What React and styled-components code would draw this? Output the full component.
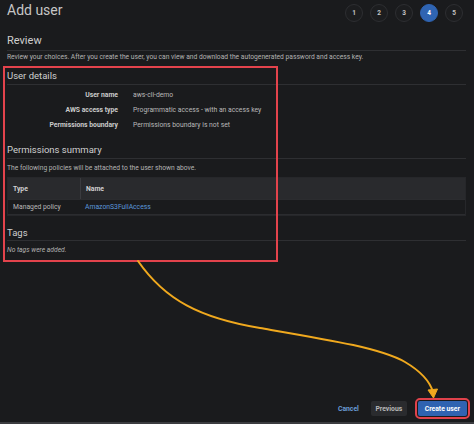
import React from "react";
import styled, { createGlobalStyle } from "styled-components";

const Global = createGlobalStyle`
  html, body { margin: 0; padding: 0; background: #1a1b1d; }
  body { font-family: Roboto, "Liberation Sans", Arial, sans-serif; }
  * { box-sizing: border-box; }
`;

const Page = styled.div`
  position: relative;
  width: 474px;
  height: 424px;
  overflow: hidden;
  background: #1a1b1d;
  display: flex;
  flex-direction: column;
  color: #c9c9c9;
`;

const Content = styled.div`
  padding: 0 8px 0 7px;
  display: flex;
  flex-direction: column;
`;

const Header = styled.div`
  height: 28px;
  display: flex;
  justify-content: space-between;
  align-items: flex-start;
`;

const Title = styled.h1`
  margin: 0;
  font-size: 14px;
  line-height: 20px;
  font-weight: 400;
  color: #c6c6c6;
`;

const Steps = styled.div`
  display: flex;
  gap: 7px;
  margin-top: 4px;
  margin-right: 3px;
`;

const Step = styled.div`
  width: 18px;
  height: 18px;
  border-radius: 50%;
  display: flex;
  align-items: center;
  justify-content: center;
  font-size: 6.5px;
  font-weight: 700;
  color: ${(p) => (p.$active ? "#ffffff" : "#c4c4c4")};
  background: ${(p) => (p.$active ? "#2f64b2" : "#1c1d1f")};
  border: 1px solid ${(p) => (p.$active ? "#2f64b2" : "#2d2e31")};
`;

const SectionTitle = styled.div`
  font-size: ${(p) => p.$size || 9.5}px;
  line-height: ${(p) => p.$lh || 12}px;
  margin-top: ${(p) => p.$mt || 0}px;
  padding-bottom: ${(p) => p.$pb || 0}px;
  border-bottom: 1px solid #2e2f32;
  color: #cfcfcf;
  font-weight: 400;
`;

const Desc = styled.div`
  font-size: 6.7px;
  line-height: 9px;
  margin-top: ${(p) => p.$mt || 0}px;
  color: #b2b2b2;
  font-style: ${(p) => (p.$italic ? "italic" : "normal")};
  white-space: nowrap;
`;

const Details = styled.div`
  margin-top: 2px;
  display: grid;
  grid-template-columns: 111px 1fr;
  column-gap: 15px;
  grid-auto-rows: 15px;
  align-items: center;
  font-size: 6.8px;
`;

const Label = styled.div`
  text-align: right;
  font-weight: 700;
  color: #cbcbcb;
`;

const Value = styled.div`
  color: #b9b9b9;
`;

const Table = styled.div`
  margin-top: 4px;
  border: 1px solid #26272a;
  font-size: 6.8px;
`;

const Row = styled.div`
  display: grid;
  grid-template-columns: 72px 1fr;
  height: ${(p) => (p.$head ? 21 : 16)}px;
  align-items: center;
  background: ${(p) => (p.$head ? "#292a2d" : "transparent")};
  border-top: ${(p) => (p.$head ? "none" : "1px solid #2b2c2f")};
  border-bottom: ${(p) => (p.$head ? "none" : "1px solid #2b2c2f")};
`;

const Cell = styled.div`
  height: 100%;
  display: flex;
  align-items: center;
  padding-left: 5px;
  font-weight: ${(p) => (p.$head ? 700 : 400)};
  color: ${(p) => (p.$head ? "#d0d0d0" : "#b9b9b9")};
  border-left: ${(p) => (p.$divider ? "1px solid #3a3b3f" : "none")};
`;

const Link = styled.a`
  color: #5b97dc;
  text-decoration: none;
`;

const Footer = styled.div`
  margin-top: auto;
  display: flex;
  justify-content: flex-end;
  align-items: center;
  padding: 0 7px 6px 0;
  gap: 11px;
`;

const TextButton = styled.button`
  background: none;
  border: none;
  padding: 0;
  margin-right: 1px;
  font-family: inherit;
  font-size: 6.8px;
  font-weight: 700;
  color: #6b9bd6;
`;

const Button = styled.button`
  height: 15px;
  padding: 0 ${(p) => (p.$primary ? 7 : 4.5)}px;
  border: none;
  border-radius: 2px;
  font-family: inherit;
  font-size: 6.8px;
  font-weight: 700;
  color: ${(p) => (p.$primary ? "#ffffff" : "#b8b8b8")};
  background: ${(p) => (p.$primary ? "#2f63b1" : "#2a2b2e")};
  outline: ${(p) => (p.$highlight ? "2px solid #e0424b" : "none")};
  outline-offset: 1px;
`;

const BottomBar = styled.div`
  height: 2px;
  background: #3b3c3f;
`;

const RedBox = styled.div`
  position: absolute;
  left: 3px;
  top: 66px;
  width: 275px;
  height: 196px;
  border: 2px solid #e3434c;
  pointer-events: none;
`;

const ArrowSvg = styled.svg`
  position: absolute;
  left: 0;
  top: 0;
  pointer-events: none;
`;

export default function App() {
  return (
    <Page>
      <Global />
      <Content>
        <Header>
          <Title>Add user</Title>
          <Steps>
            {[1, 2, 3, 4, 5].map((n) => (
              <Step key={n} $active={n === 4}>
                {n}
              </Step>
            ))}
          </Steps>
        </Header>

        <SectionTitle $size={11} $lh={18} $mt={4}>
          Review
        </SectionTitle>
        <Desc $mt={2}>
          Review your choices. After you create the user, you can view and download the autogenerated password and access key.
        </Desc>

        <SectionTitle $mt={8} $pb={2}>User details</SectionTitle>
        <Details>
          <Label>User name</Label>
          <Value>aws-cli-demo</Value>
          <Label>AWS access type</Label>
          <Value>Programmatic access - with an access key</Value>
          <Label>Permissions boundary</Label>
          <Value>Permissions boundary is not set</Value>
        </Details>

        <SectionTitle $mt={12} $pb={2}>
          Permissions summary
        </SectionTitle>
        <Desc $mt={5}>The following policies will be attached to the user shown above.</Desc>
        <Table>
          <Row $head>
            <Cell $head>Type</Cell>
            <Cell $head $divider>
              Name
            </Cell>
          </Row>
          <Row>
            <Cell>Managed policy</Cell>
            <Cell>
              <Link href="#">AmazonS3FullAccess</Link>
            </Cell>
          </Row>
        </Table>

        <SectionTitle $mt={11} $pb={1}>Tags</SectionTitle>
        <Desc $mt={5} $italic>
          No tags were added.
        </Desc>
      </Content>

      <Footer>
        <TextButton>Cancel</TextButton>
        <Button>Previous</Button>
        <Button $primary $highlight>
          Create user
        </Button>
      </Footer>
      <BottomBar />

      <RedBox />
      <ArrowSvg width="474" height="424" viewBox="0 0 474 424">
        <path
          d="M138 261 C 165 300, 200 318, 260 328 C 330 340, 380 348, 405 362 C 422 372, 430 382, 433 392"
          fill="none"
          stroke="#f0a91e"
          strokeWidth="2"
          strokeLinecap="round"
        />
        <path d="M428 390 L433.5 398 L437.5 389 Z" fill="#f0a91e" stroke="#f0a91e" strokeWidth="1" strokeLinejoin="round" />
      </ArrowSvg>
    </Page>
  );
}
